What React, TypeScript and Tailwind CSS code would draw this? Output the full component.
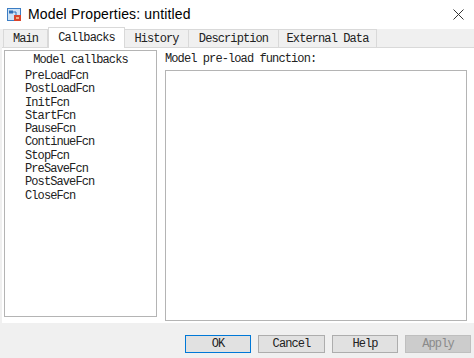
const mono = { fontFamily: '"Liberation Mono", "DejaVu Sans Mono", monospace' };

const callbacks = [
  "PreLoadFcn",
  "PostLoadFcn",
  "InitFcn",
  "StartFcn",
  "PauseFcn",
  "ContinueFcn",
  "StopFcn",
  "PreSaveFcn",
  "PostSaveFcn",
  "CloseFcn",
];

const tabs = [
  { label: "Main", w: "w-[45px]" },
  { label: "Callbacks", w: "w-[77px]", active: true },
  { label: "History", w: "w-[64px]" },
  { label: "Description", w: "w-[90px]" },
  { label: "External Data", w: "w-[98px]" },
];

function ModelIcon() {
  return (
    <svg width="15" height="14" viewBox="0 0 15 14">
      <rect x="0.5" y="0.5" width="13" height="12" fill="#cfe3f5" stroke="#3b7dc4" />
      <rect x="2" y="2.5" width="4" height="3" fill="#2f6fb5" />
      <path d="M6 4 L9 4 L9 8" stroke="#2f6fb5" fill="none" />
      <rect x="7" y="7" width="7" height="6" fill="#d9442b" />
      <rect x="9" y="9" width="3" height="2" fill="#f4b183" />
    </svg>
  );
}

export default function App() {
  return (
    <div
      className="w-[474px] h-[358px] bg-[#f0f0f0] flex flex-col overflow-hidden text-[#222]"
      style={mono}
    >
      {/* title bar */}
      <div className="h-[29px] bg-white flex items-center pl-[7px] pr-[10px] shrink-0 text-black">
        <ModelIcon />
        <span
          className="ml-[6px] text-[14px] tracking-[0.15px]"
          style={{ fontFamily: '"Liberation Sans", Arial, sans-serif' }}
        >
          Model Properties: untitled
        </span>
        <svg className="ml-auto" width="11" height="11" viewBox="0 0 11 11">
          <path d="M0.5 0.5 L10.5 10.5 M10.5 0.5 L0.5 10.5" stroke="#333" strokeWidth="1" />
        </svg>
      </div>

      {/* tabs */}
      <div className="h-[18px] flex items-end pl-[3px] shrink-0 relative z-10">
        {tabs.map((t) =>
          t.active ? (
            <div
              key={t.label}
              className={`${t.w} h-[21px] -mb-[1px] bg-white border border-b-0 border-[#d9d9d9] flex items-center justify-center text-[12px] tracking-[-0.9px]`}
            >
              {t.label}
            </div>
          ) : (
            <div
              key={t.label}
              className={`${t.w} h-[18px] bg-[#f0f0f0] border border-l-0 border-b-0 border-[#d9d9d9] first:border-l flex items-center justify-center text-[12px] tracking-[-0.9px]`}
            >
              {t.label}
            </div>
          )
        )}
      </div>

      {/* page */}
      <div className="h-[276px] bg-white border-t border-[#d9d9d9] ml-[2px] flex pl-[2px] pt-[2px] gap-[8px] shrink-0">
        <div className="w-[153px] h-[267px] border border-[#b4b4b4] text-[12px] tracking-[-0.9px]">
          <div className="text-center pt-[2px] leading-[15px]">Model callbacks</div>
          <div className="pl-[20px] pt-[2px] flex flex-col leading-[13.3px]">
            {callbacks.map((c) => (
              <div key={c}>{c}</div>
            ))}
          </div>
        </div>
        <div className="flex flex-col pt-[2px]">
          <div className="text-[12px] tracking-[-0.9px] leading-[15px]">Model pre-load function:</div>
          <div className="mt-[3px] w-[302px] h-[251px] border border-[#b4b4b4] bg-white" />
        </div>
      </div>

      {/* buttons */}
      <div className="flex-1 flex justify-end items-start pt-[12px] pr-[3px] gap-[7px] text-[12px] tracking-[-0.9px]">
        <button className="w-[66px] h-[18px] bg-[#e1e1e1] border border-[#0078d7] flex items-center justify-center">
          OK
        </button>
        <button className="w-[67px] h-[18px] bg-[#e1e1e1] border border-[#adadad] flex items-center justify-center">
          Cancel
        </button>
        <button className="w-[66px] h-[18px] bg-[#e1e1e1] border border-[#adadad] flex items-center justify-center">
          Help
        </button>
        <button
          disabled
          className="w-[66px] h-[18px] bg-[#cccccc] border border-[#bfbfbf] text-[#8a8a8a] flex items-center justify-center"
        >
          Apply
        </button>
      </div>
    </div>
  );
}
